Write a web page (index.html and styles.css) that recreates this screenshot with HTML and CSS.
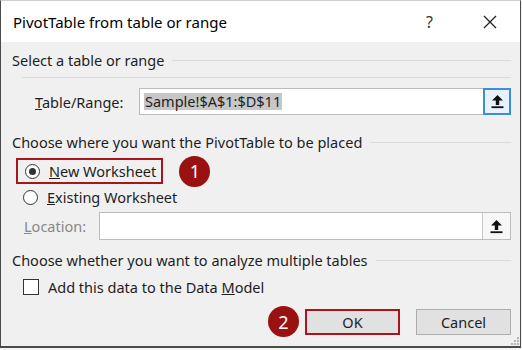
FILE: index.html
```html
<!DOCTYPE html>
<html lang="en">
<head>
    <meta charset="UTF-8">
    <title>PivotTable from table or range</title>
    <link rel="stylesheet" href="styles.css">
</head>
<body>
    <div class="dialog">
        <div class="title-bar">
            <span class="title">PivotTable from table or range</span>
            <span class="help">?</span>
            <svg class="close" width="14" height="14" viewBox="0 0 14 14">
                <path d="M1 1 L13 13 M13 1 L1 13" stroke="#222" stroke-width="1.3" fill="none"/>
            </svg>
        </div>

        <div class="content">
            <div class="group-head">
                <span>Select a table or range</span>
                <div class="rule"></div>
            </div>
            <div class="sep"></div>

            <div class="field-row range-row">
                <label class="field-label"><u>T</u>able/Range:</label>
                <div class="input active">
                    <span class="selected">Sample!$A$1:$D$11</span>
                    <div class="ref-btn focus">
                        <svg width="13" height="15" viewBox="0 0 13 15">
                            <path d="M6.5 1 L12 6.5 L8.2 6.5 L8.2 11 L4.8 11 L4.8 6.5 L1 6.5 Z" fill="#111"/>
                            <rect x="0.5" y="12.3" width="12" height="1.8" fill="#111"/>
                        </svg>
                    </div>
                </div>
            </div>

            <div class="group-head head-2">
                <span>Choose where you want the PivotTable to be placed</span>
                <div class="rule"></div>
            </div>

            <div class="option-row first">
                <div class="highlight">
                    <span class="radio checked"></span>
                    <span><u>N</u>ew Worksheet</span>
                </div>
                <span class="badge badge-1">1</span>
            </div>
            <div class="option-row">
                <span class="radio"></span>
                <span><u>E</u>xisting Worksheet</span>
            </div>

            <div class="field-row location-row">
                <label class="field-label muted"><u>L</u>ocation:</label>
                <div class="input">
                    <div class="ref-btn">
                        <svg width="13" height="15" viewBox="0 0 13 15">
                            <path d="M6.5 1 L12 6.5 L8.2 6.5 L8.2 11 L4.8 11 L4.8 6.5 L1 6.5 Z" fill="#111"/>
                            <rect x="0.5" y="12.3" width="12" height="1.8" fill="#111"/>
                        </svg>
                    </div>
                </div>
            </div>

            <div class="group-head head-3">
                <span>Choose whether you want to analyze multiple tables</span>
                <div class="rule"></div>
            </div>

            <div class="option-row check-row">
                <span class="checkbox"></span>
                <span>Add this data to the Data <u>M</u>odel</span>
            </div>

            <div class="buttons">
                <span class="badge badge-2">2</span>
                <button class="btn ok">OK</button>
                <button class="btn">Cancel</button>
            </div>
        </div>

        <div class="grip">
            <i></i><i></i><i></i><i></i><i></i><i></i>
        </div>
    </div>
</body>
</html>
```

FILE: styles.css
```css
* {
    margin: 0;
    padding: 0;
    box-sizing: border-box;
}

body {
    font-family: "Noto Sans", "Liberation Sans", Arial, sans-serif;
    font-size: 14.5px;
    color: #1e1e1e;
    background-color: #f5f5f5;
    width: 522px;
    height: 350px;
    overflow: hidden;
}

.dialog {
    position: relative;
    width: 521px;
    height: 348px;
    background-color: #f0f0f0;
    border: 1px solid #4a4a4a;
    border-top-color: #cfcfcf;
    border-bottom-width: 2px;
}

.title-bar {
    height: 41px;
    background-color: #fff;
    display: flex;
    align-items: center;
    padding-left: 12px;
}

.title {
    font-size: 15px;
    color: #000;
    flex: 1;
}

.help {
    font-size: 16px;
    color: #333;
    margin-right: 50px;
}

.close {
    margin-right: 23px;
}

.content {
    padding: 0 9px 0 11px;
}

.group-head {
    display: flex;
    align-items: center;
    gap: 8px;
    height: 20px;
    margin-top: 8px;
}

.group-head .rule {
    flex: 1;
    border-top: 1px solid #dadada;
}

.sep {
    margin: 7px 0 0 10px;
    border-top: 1px solid #dadada;
}

.field-row {
    display: flex;
    align-items: center;
}

.range-row {
    margin-top: 10px;
}

.range-row .field-label {
    margin-left: 23px;
    width: 104px;
}

.location-row {
    margin-top: 2px;
}

.location-row .field-label {
    margin-left: 12px;
    width: 75px;
}

.muted {
    color: #888;
}

.input {
    flex: 1;
    height: 27px;
    background-color: #fff;
    border: 1px solid #bcbcbc;
    display: flex;
    align-items: center;
    justify-content: space-between;
    padding-left: 4px;
}

.location-row .input {
    height: 28px;
    justify-content: flex-end;
}

.selected {
    background-color: #c7c7c7;
    padding: 0 1px;
    line-height: 17px;
}

.ref-btn {
    width: 28px;
    height: 100%;
    border-left: 1px solid #c9c9c9;
    background-color: #f7f7f7;
    display: flex;
    align-items: center;
    justify-content: center;
}

.ref-btn.focus {
    border: 2px solid #3b8fd9;
    background-color: #e8f2fc;
    height: calc(100% + 2px);
    margin-right: -1px;
}

.head-2 {
    margin-top: 17px;
}

.option-row {
    display: flex;
    align-items: center;
    gap: 9px;
    height: 26px;
    padding-left: 11px;
}

.option-row.first {
    margin-top: 6px;
    padding-left: 4px;
}

.highlight {
    display: flex;
    align-items: center;
    gap: 9px;
    height: 26px;
    padding: 0 5px 0 7px;
    border: 2px solid #a8161c;
}

.radio {
    width: 15px;
    height: 15px;
    border-radius: 50%;
    border: 1px solid #333;
    background-color: #fff;
    position: relative;
}

.radio.checked::after {
    content: "";
    position: absolute;
    top: 3px;
    left: 3px;
    width: 7px;
    height: 7px;
    border-radius: 50%;
    background-color: #333;
}

.badge {
    width: 31px;
    height: 31px;
    border-radius: 50%;
    background-color: #9a1111;
    color: #fff;
    font-size: 18px;
    display: flex;
    align-items: center;
    justify-content: center;
}

.badge-1 {
    margin-left: 7px;
}

.head-3 {
    margin-top: 10px;
}

.check-row {
    margin-top: 4px;
}

.checkbox {
    width: 16px;
    height: 16px;
    border: 1px solid #333;
    background-color: #fff;
}

.buttons {
    display: flex;
    align-items: center;
    justify-content: flex-end;
    margin-top: 6px;
}

.badge-2 {
    margin-right: 6px;
}

.btn {
    font-family: inherit;
    font-size: 14.5px;
    color: #1e1e1e;
    width: 95px;
    height: 26px;
    background-color: #e1e1e1;
    border: 1px solid #adadad;
    margin-left: 16px;
}

.btn.ok {
    margin-left: 0;
    border: 2px solid #a8161c;
}

.grip {
    position: absolute;
    right: 1px;
    bottom: 1px;
    width: 9px;
    height: 9px;
}

.grip i {
    position: absolute;
    width: 2px;
    height: 2px;
    background-color: #b5b5b5;
}

.grip i:nth-child(1) { right: 0; bottom: 0; }
.grip i:nth-child(2) { right: 3px; bottom: 0; }
.grip i:nth-child(3) { right: 6px; bottom: 0; }
.grip i:nth-child(4) { right: 0; bottom: 3px; }
.grip i:nth-child(5) { right: 3px; bottom: 3px; }
.grip i:nth-child(6) { right: 0; bottom: 6px; }
```
